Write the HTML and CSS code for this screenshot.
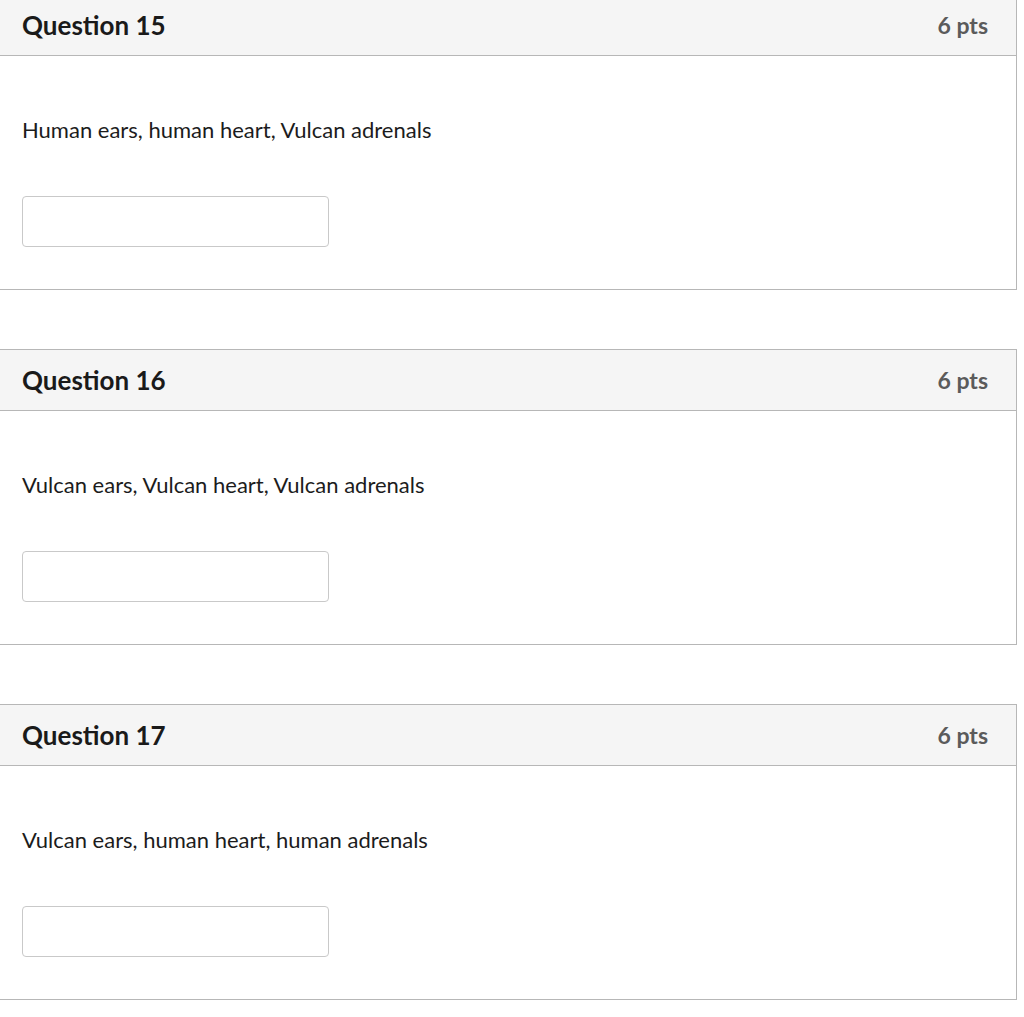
FILE: index.html
```html
<!DOCTYPE html>
<html>
<head>
<meta charset="utf-8">
<link rel="stylesheet" href="styles.css">
</head>
<body>
<div class="quiz">
  <div class="question">
    <div class="q-header">
      <span class="q-title">Question 15</span>
      <span class="q-pts">6 pts</span>
    </div>
    <div class="q-body">
      <p class="q-text">Human ears, human heart, Vulcan adrenals</p>
      <input class="q-input" type="text">
    </div>
  </div>
  <div class="question">
    <div class="q-header">
      <span class="q-title">Question 16</span>
      <span class="q-pts">6 pts</span>
    </div>
    <div class="q-body">
      <p class="q-text">Vulcan ears, Vulcan heart, Vulcan adrenals</p>
      <input class="q-input" type="text">
    </div>
  </div>
  <div class="question">
    <div class="q-header">
      <span class="q-title">Question 17</span>
      <span class="q-pts">6 pts</span>
    </div>
    <div class="q-body">
      <p class="q-text">Vulcan ears, human heart, human adrenals</p>
      <input class="q-input" type="text">
    </div>
  </div>
</div>
</body>
</html>
```
FILE: styles.css
```css
html, body {
  margin: 0;
  padding: 0;
  background: #fff;
}
body {
  font-family: Lato, "Open Sans", sans-serif;
  color: #1c1c1c;
}
.quiz {
  display: flex;
  flex-direction: column;
  gap: 59px;
  margin-top: -6px;
  margin-left: -1px;
  width: 1018px;
}
.question {
  border: 1px solid #b7b7b7;
  box-sizing: border-box;
}
.q-header {
  height: 61px;
  box-sizing: border-box;
  background: #f5f5f5;
  border-bottom: 1px solid #b7b7b7;
  display: flex;
  align-items: center;
  justify-content: space-between;
  padding: 0 28px 0 22px;
}
.q-title {
  font-size: 26px;
  font-weight: 700;
  color: #1a1a1a;
}
.q-pts {
  font-size: 23px;
  font-weight: 700;
  color: #5b5b5b;
}
.q-body {
  padding: 59px 22px 42px;
  display: flex;
  flex-direction: column;
  align-items: flex-start;
}
.q-text {
  margin: 0 0 51px;
  font-size: 22px;
  line-height: 30px;
  color: #1c1c1c;
}
.q-input {
  width: 307px;
  height: 51px;
  box-sizing: border-box;
  border: 1px solid #c9c9c9;
  border-radius: 4px;
  margin: 0;
  padding: 0 10px;
  font-family: inherit;
  font-size: 20px;
  background: #fff;
}
```
